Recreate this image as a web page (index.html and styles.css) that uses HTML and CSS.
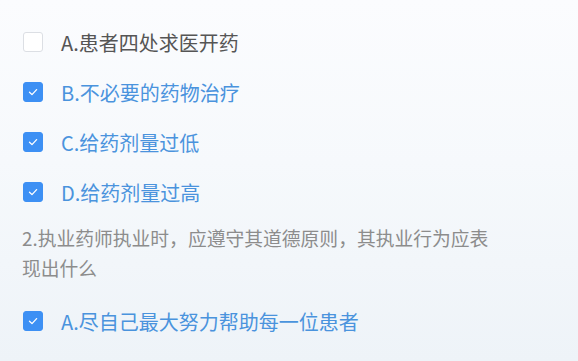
FILE: index.html
```html
<!DOCTYPE html>
<html>
<head>
    <title>练习题</title>
    <link rel="stylesheet" href="styles.css">
</head>
<body>
    <div class="container">
        <div class="option">
            <span class="box"></span>
            <span class="label">A.患者四处求医开药</span>
        </div>
        <div class="option checked">
            <span class="box"><svg viewBox="0 0 20 20" width="20" height="20"><path d="M6.5 10.2 L9 12.6 L13.6 7.6" fill="none" stroke="#fff" stroke-width="1.3" stroke-linecap="round" stroke-linejoin="round"/></svg></span>
            <span class="label">B.不必要的药物治疗</span>
        </div>
        <div class="option checked">
            <span class="box"><svg viewBox="0 0 20 20" width="20" height="20"><path d="M6.5 10.2 L9 12.6 L13.6 7.6" fill="none" stroke="#fff" stroke-width="1.3" stroke-linecap="round" stroke-linejoin="round"/></svg></span>
            <span class="label">C.给药剂量过低</span>
        </div>
        <div class="option checked">
            <span class="box"><svg viewBox="0 0 20 20" width="20" height="20"><path d="M6.5 10.2 L9 12.6 L13.6 7.6" fill="none" stroke="#fff" stroke-width="1.3" stroke-linecap="round" stroke-linejoin="round"/></svg></span>
            <span class="label">D.给药剂量过高</span>
        </div>

        <p class="question">2.执业药师执业时，应遵守其道德原则，其执业行为应表现出什么</p>

        <div class="option checked">
            <span class="box"><svg viewBox="0 0 20 20" width="20" height="20"><path d="M6.5 10.2 L9 12.6 L13.6 7.6" fill="none" stroke="#fff" stroke-width="1.3" stroke-linecap="round" stroke-linejoin="round"/></svg></span>
            <span class="label">A.尽自己最大努力帮助每一位患者</span>
        </div>
    </div>
</body>
</html>
```

FILE: styles.css
```css
html, body {
    margin: 0;
    height: 100%;
}

body {
    background: linear-gradient(180deg, #fbfcfe 0%, #f6f9fc 45%, #eef3f8 100%);
    font-family: "Noto Sans CJK SC", "Noto Sans", sans-serif;
    overflow: hidden;
}

.container {
    padding: 17px 0 0 23px;
}

.option {
    display: flex;
    align-items: center;
    height: 50px;
}

.box {
    width: 20px;
    height: 20px;
    box-sizing: border-box;
    border: 1px solid #dcdfe4;
    border-radius: 3px;
    background: #fff;
    flex-shrink: 0;
}

.box svg {
    display: block;
    margin: -1px;
}

.checked .box {
    background: #3d90f4;
    border-color: #3d90f4;
}

.label {
    margin-left: 18px;
    font-size: 20px;
    color: #555;
}

.checked .label {
    color: #4a93dd;
}

.question {
    margin: 6px 0 13px -1px;
    max-width: 476px;
    font-size: 18.8px;
    line-height: 30px;
    color: #8c8c8c;
}
```
